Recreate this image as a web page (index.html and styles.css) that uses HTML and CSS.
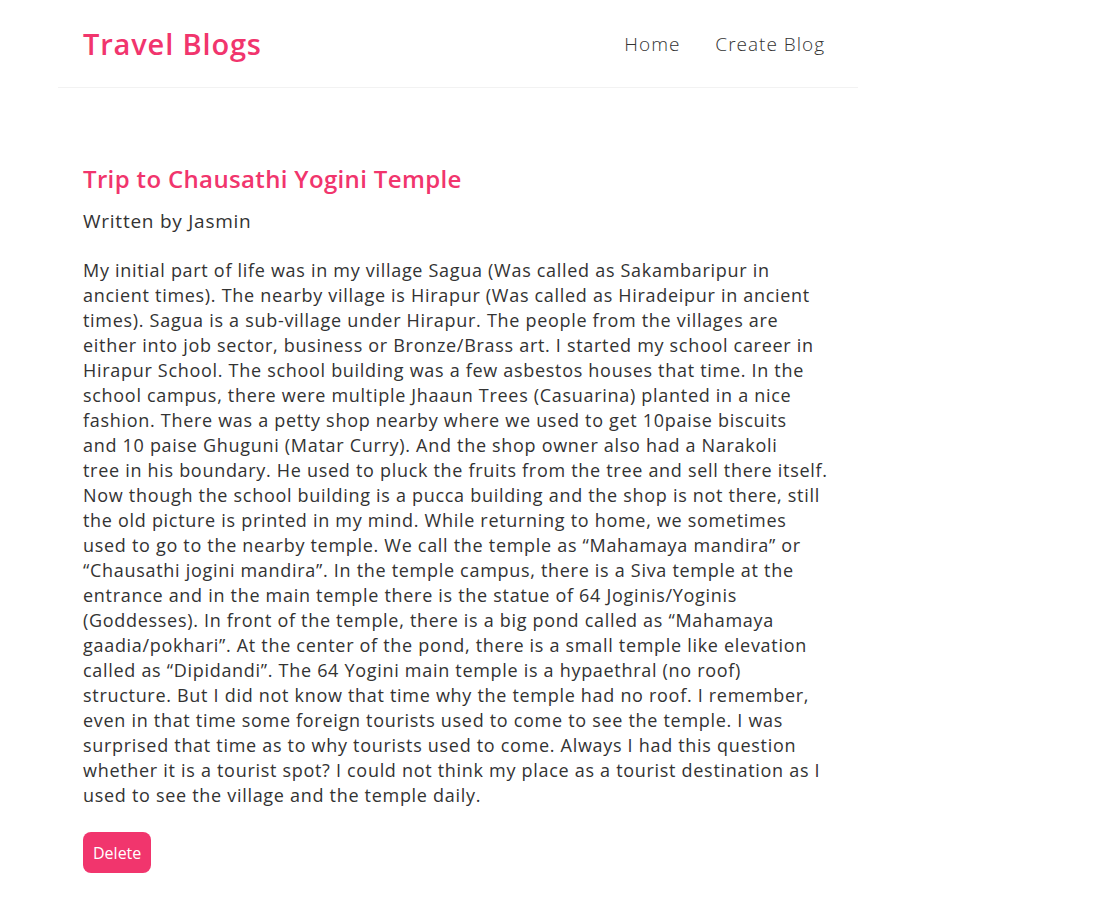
FILE: index.html
```html
<!DOCTYPE html>
<html lang="en">
<head>
    <meta charset="UTF-8">
    <meta name="viewport" content="width=device-width, initial-scale=1.0">
    <title>Travel Blogs</title>
    <link rel="stylesheet" href="styles.css">
</head>
<body>
    <div class="app">
        <nav class="navbar">
            <h1>Travel Blogs</h1>
            <div class="links">
                <a href="#">Home</a>
                <a href="#">Create Blog</a>
            </div>
        </nav>
        <div class="content">
            <div class="blog-details">
                <article>
                    <h2>Trip to Chausathi Yogini Temple</h2>
                    <p class="author">Written by Jasmin</p>
                    <div class="body">
                        My initial part of life was in my village Sagua (Was called as Sakambaripur in<br>
                        ancient times). The nearby village is Hirapur (Was called as Hiradeipur in ancient<br>
                        times). Sagua is a sub-village under Hirapur. The people from the villages are<br>
                        either into job sector, business or Bronze/Brass art. I started my school career in<br>
                        Hirapur School. The school building was a few asbestos houses that time. In the<br>
                        school campus, there were multiple Jhaaun Trees (Casuarina) planted in a nice<br>
                        fashion. There was a petty shop nearby where we used to get 10paise biscuits<br>
                        and 10 paise Ghuguni (Matar Curry). And the shop owner also had a Narakoli<br>
                        tree in his boundary. He used to pluck the fruits from the tree and sell there itself.<br>
                        Now though the school building is a pucca building and the shop is not there, still<br>
                        the old picture is printed in my mind. While returning to home, we sometimes<br>
                        used to go to the nearby temple. We call the temple as “Mahamaya mandira” or<br>
                        “Chausathi jogini mandira”. In the temple campus, there is a Siva temple at the<br>
                        entrance and in the main temple there is the statue of 64 Joginis/Yoginis<br>
                        (Goddesses). In front of the temple, there is a big pond called as “Mahamaya<br>
                        gaadia/pokhari”. At the center of the pond, there is a small temple like elevation<br>
                        called as “Dipidandi”. The 64 Yogini main temple is a hypaethral (no roof)<br>
                        structure. But I did not know that time why the temple had no roof. I remember,<br>
                        even in that time some foreign tourists used to come to see the temple. I was<br>
                        surprised that time as to why tourists used to come. Always I had this question<br>
                        whether it is a tourist spot? I could not think my place as a tourist destination as I<br>
                        used to see the village and the temple daily.
                    </div>
                    <button class="delete-button">Delete</button>
                </article>
            </div>
        </div>
    </div>
</body>
</html>
```

FILE: styles.css
```css
* {
    margin: 0;
    font-family: 'Open Sans', sans-serif;
    color: #333;
}
body {
    margin: 0;
    background: #fff;
}
.app {
    width: 800px;
    margin-left: 58px;
}
.navbar {
    height: 87px;
    padding: 0 33px 0 25px;
    display: flex;
    align-items: center;
    border-bottom: 1px solid #f2f2f2;
}
.navbar h1 {
    color: #f1356d;
    font-size: 29px;
    font-weight: 600;
    letter-spacing: 0.85px;
}
.links {
    margin-left: auto;
    display: flex;
    gap: 35px;
}
.links a {
    text-decoration: none;
    font-size: 19px;
    font-weight: 300;
    letter-spacing: 1px;
}
.content {
    padding: 76px 25px 0;
}
.blog-details h2 {
    font-size: 24px;
    font-weight: 600;
    color: #f1356d;
    letter-spacing: 0.35px;
    line-height: 30px;
    margin-bottom: 15px;
}
.author {
    font-size: 19px;
    letter-spacing: 0.75px;
    line-height: 24px;
}
.body {
    margin-top: 25px;
    font-size: 18px;
    letter-spacing: 0.7px;
    line-height: 25px;
    white-space: nowrap;
}
.delete-button {
    margin-top: 24px;
    background: #f1356d;
    color: #fff;
    border: 0;
    padding: 0 10px;
    height: 41px;
    border-radius: 8px;
    font-size: 16px;
    cursor: pointer;
}
```
